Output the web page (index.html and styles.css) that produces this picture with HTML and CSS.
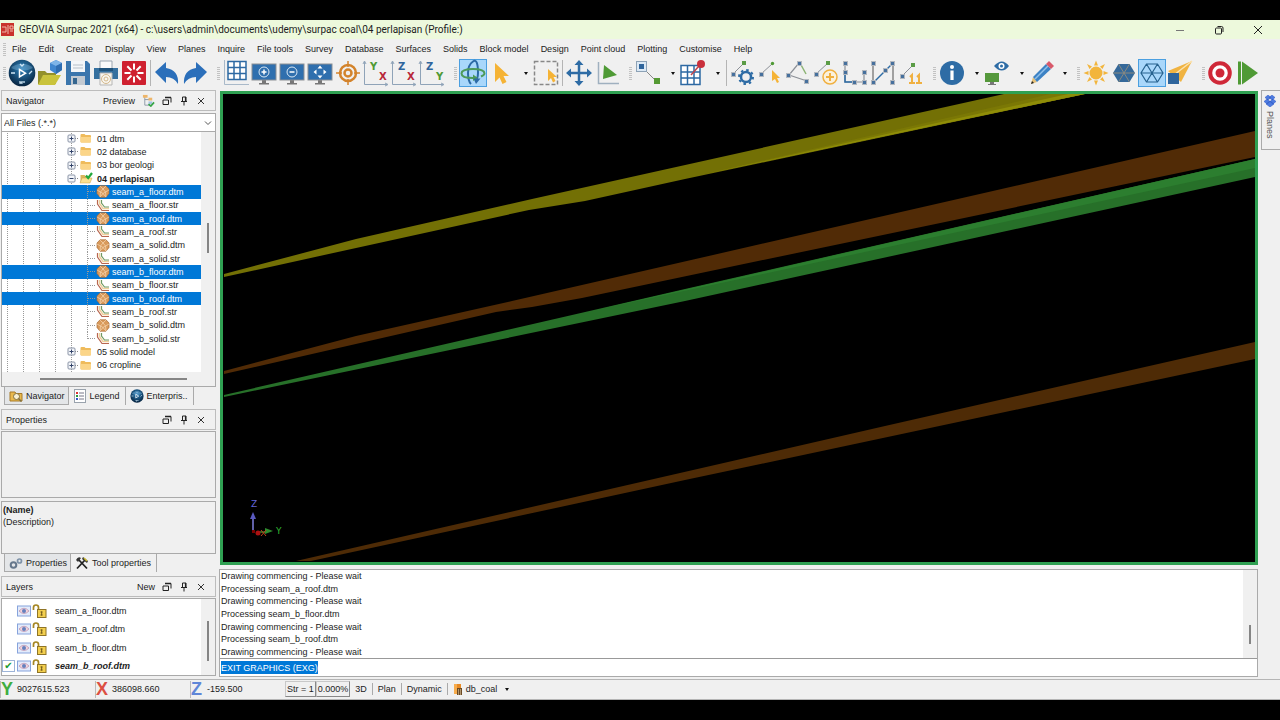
FILE: index.html
```
<!DOCTYPE html>
<html lang="en">
<head>
	<meta charset="UTF-8">
	<title>GEOVIA Surpac 2021</title>
	<link rel="stylesheet" href="styles.css">
</head>
<body>
<!-- shared icons -->
<svg class="defs" aria-hidden="true">
	<defs>
		<radialGradient id="ball" cx="50%" cy="35%" r="65%">
			<stop offset="0" stop-color="#2f84bd"/>
			<stop offset="1" stop-color="#06233f"/>
		</radialGradient>
	</defs>
	<symbol id="i-globe" viewBox="0 0 28 28">
		<circle cx="14" cy="14" r="13.3" fill="url(#ball)"/>
		<path d="M3 9a13 9 0 0 1 22 0a18 12 0 0 1-22 0z" fill="#8fc4e6" opacity=".35"/>
		<path d="M11.500 10.500l6 3.700-6 3.700z" fill="none" stroke="#fff" stroke-width="1.500"/>
		<path d="M3 14h4M21 15l3-3M12 5l2 2 2-2M12 22v2h2v-2M16 22v2" fill="none" stroke="#cfe6f5" stroke-width="1.300"/>
	</symbol>
	<symbol id="i-float" viewBox="0 0 10 10"><path d="M1 4h5.500v4.500H1zM3 1.500h6v5" fill="none" stroke="#222"/><path d="M3 1.500h6" stroke="#222" stroke-width="1.500"/></symbol>
	<symbol id="i-pin" viewBox="0 0 10 10"><path d="M3.500 1h3.500v4.500H3.500zM2 5.500h6M5 5.500v4" fill="none" stroke="#222"/><path d="M6.500 1v4.500" stroke="#222" stroke-width="1.200"/></symbol>
	<symbol id="i-close" viewBox="0 0 10 10"><path d="M2 2l6 6M8 2l-6 6" stroke="#333"/></symbol>
	<symbol id="i-plus" viewBox="0 0 15 13"><path d="M11 6.500h4" stroke="#888" stroke-dasharray="1 1"/><rect x="4" y="3" width="7" height="7" rx="1" fill="#f4f6fa" stroke="#8a94a6"/><path d="M5.500 6.500h4M7.500 4.500v4" stroke="#33446a"/></symbol>
	<symbol id="i-minus" viewBox="0 0 15 13"><path d="M11 6.500h4" stroke="#888" stroke-dasharray="1 1"/><rect x="4" y="3" width="7" height="7" rx="1" fill="#f4f6fa" stroke="#8a94a6"/><path d="M5.500 6.500h4" stroke="#33446a"/></symbol>
	<symbol id="i-folder" viewBox="0 0 14 13"><path d="M1.500 3q0-1 1-1h3l1 1h4.500q1 0 1 1v5.500q0 1-1 1H2.500q-1 0-1-1z" fill="#efbb5b"/><path d="M1.500 5h10.500v4.500q0 1-1 1H2.500q-1 0-1-1z" fill="#fbd588"/></symbol>
	<symbol id="i-folder-ok" viewBox="0 0 14 13"><path d="M1.500 3h4l1 1h4v6.500h-9z" fill="#d9b45c"/><path d="M1 11l2-5h10l-2 5z" fill="#fbe08f" stroke="#c9a146" stroke-width=".5"/><path d="M7 3.500l2.200 2.500L13 1" fill="none" stroke="#21a83c" stroke-width="2.200"/></symbol>
	<symbol id="i-dtm" viewBox="0 0 14 13"><path d="M4 .8h6l3 3.200v4.500l-3 3.700H4L1 8.500V4z" fill="#d99a5b" stroke="#a76a33" stroke-width=".7"/><path d="M4 1l3 3 3-3M1 5l3.500 2L7 4l2.500 3L13 5M4.500 7L4 12l3-3.500 3 3.500-.5-5M4.500 7L7 8.500 9.500 7" fill="none" stroke="#f6d9b4" stroke-width=".7"/></symbol>
	<symbol id="i-str" viewBox="0 0 14 13"><path d="M1.500 1v4l4.500 6.500h7" fill="none" stroke="#b9664f" stroke-width="1.200"/><path d="M3.500 1v3.500l3.500 5h6" fill="none" stroke="#efcf9c" stroke-width="1.500"/><path d="M5.500 1v3l3 4h4.500" fill="none" stroke="#6f9a62" stroke-width="1.200"/></symbol>
	<symbol id="i-branch" viewBox="0 0 10 13"><path d="M1.500 0v13M2 6.500h8" stroke="#999" stroke-dasharray="1 1"/></symbol>
	<symbol id="i-branch-end" viewBox="0 0 10 13"><path d="M1.500 0v7M2 6.500h8" stroke="#999" stroke-dasharray="1 1"/></symbol>
	<symbol id="i-eye" viewBox="0 0 14 12"><rect x=".5" y="1" width="13" height="10" fill="#e3ebfb" stroke="#86a3dc"/><path d="M2 6q5-5.500 10 0q-5 5-10 0z" fill="#f4d5dc" stroke="#b68ba8" stroke-width=".7"/><circle cx="7" cy="6" r="2" fill="#6480bd"/></symbol>
	<symbol id="i-lock" viewBox="0 0 15 14"><path d="M1.500 6V3.500q0-2.500 2.500-2.500t2.500 2.500V6" fill="none" stroke="#a58623" stroke-width="1.700"/><rect x="5.500" y="5.500" width="8.500" height="8" fill="#f3cf4f" stroke="#8f7426"/><path d="M9.700 7.500v4M8.500 8h2M8.500 11h2" stroke="#6b5418"/></symbol>
	<symbol id="i-node" viewBox="0 0 5 5"><rect x=".5" y=".5" width="4" height="4" fill="#46709d" stroke="#b3b8bf"/></symbol>
	<symbol id="i-monitor" viewBox="0 0 28 28"><path d="M12 21h4v3h3v1.500H9V24h3z" fill="#777"/><rect x="2" y="5" width="24" height="16" fill="#2f6fae" stroke="#8b8f94"/></symbol>
</svg>

<div class="app">
	<header class="titlebar">
		<svg class="logo" viewBox="0 0 13 13"><rect width="13" height="13" fill="#c9332b"/><path d="M1 4h4v5H1M7 2v9M9 3h3v3H9zM9 8h3" fill="none" stroke="#f0b9a8"/></svg>
		<h1>GEOVIA Surpac 2021 (x64) - c:\users\admin\documents\udemy\surpac coal\04 perlapisan (Profile:)</h1>
		<button class="win" aria-label="Minimise"><svg viewBox="0 0 10 10"><path d="M1 5.500h8" stroke="#777"/></svg></button>
		<button class="win" aria-label="Restore"><svg viewBox="0 0 10 10"><rect x="1.500" y="3" width="6" height="6" rx="1" fill="none" stroke="#222"/><path d="M3.500 1.500h4q1.500 0 1.500 1.500v4" fill="none" stroke="#222"/></svg></button>
		<button class="win" aria-label="Close"><svg viewBox="0 0 10 10"><path d="M1 1l8 8M9 1L1 9" stroke="#222"/></svg></button>
	</header>

	<nav class="menubar">
		<span class="grip"></span>
		<button>File</button><button>Edit</button><button>Create</button><button>Display</button><button>View</button><button>Planes</button><button>Inquire</button><button>File tools</button><button>Survey</button><button>Database</button><button>Surfaces</button><button>Solids</button><button>Block model</button><button>Design</button><button>Point cloud</button><button>Plotting</button><button>Customise</button><button>Help</button>
	</nav>

	<div class="toolbar">
		<div class="group">
			<span class="grip"></span>
			<button class="tool" aria-label="Main menu"><svg viewBox="0 0 28 28"><use href="#i-globe"/></svg></button>
			<button class="tool" aria-label="Open"><svg viewBox="0 0 28 28"><path d="M2 12h7l2 2h9v11H2z" fill="#93902a"/><path d="M7 16h18l-6 10H2z" fill="#c9c33c"/><path d="M20 1l6 3v7l-6 4-6-4V4z" fill="#3f86cf"/><path d="M14 4l6 3 6-3-6-3z" fill="#7db4e8"/><path d="M20 7v8l6-4V4z" fill="#2e6db2"/></svg></button>
			<button class="tool" aria-label="Save"><svg viewBox="0 0 28 28"><path d="M2 2h21l3 3v21H2z" fill="#3b76ad"/><rect x="7" y="2" width="14" height="11" fill="#f4f6f8"/><path d="M9 6h10M9 9h10" stroke="#b6bfc8"/><rect x="7" y="17" width="14" height="9" fill="#c3cad2"/><rect x="9" y="19" width="4" height="6" fill="#35668f"/></svg></button>
			<button class="tool" aria-label="Print"><svg viewBox="0 0 28 28"><path d="M8 2h12v8H8z" fill="#fafafa" stroke="#9aa5b0"/><path d="M2 9h24v11H2z" fill="#35709f"/><path d="M7 9h14v3H7z" fill="#20537c"/><path d="M8 14h12v12H8z" fill="#f8f5ef" stroke="#b5b5b5"/><circle cx="14" cy="20" r="4.500" fill="none" stroke="#d3b88c"/><circle cx="14" cy="20" r="2" fill="none" stroke="#d3b88c"/></svg></button>
			<button class="tool" aria-label="Reset graphics"><svg viewBox="0 0 28 28"><rect x="2" y="2" width="24" height="24" rx="1" fill="#cf2030"/><path d="M14 4.500v6M14 17.500v6M4.500 14h6M17.500 14h6M7.300 7.300l4.200 4.200M16.500 16.500l4.200 4.200M20.700 7.300l-4.200 4.200M11.500 16.500l-4.200 4.200" stroke="#fff" stroke-width="2"/></svg></button>
			<span class="sep"></span>
			<button class="tool" aria-label="Undo"><svg viewBox="0 0 28 28"><path d="M2 13L13 3v6q13 2 12 16q-4-7-12-7v6z" fill="#2b6fba"/></svg></button>
			<button class="tool" aria-label="Redo"><svg viewBox="0 0 28 28"><path d="M26 13L15 3v6Q2 11 3 25q4-7 12-7v6z" fill="#2b6fba"/></svg></button>
		</div>
		<div class="group">
			<span class="grip"></span>
			<button class="tool" aria-label="Grid"><svg viewBox="0 0 28 28"><path d="M2.500 1v24.500H27" fill="none" stroke="#a9b9c9"/><path d="M6 2.500h18v18H6zM6 8.500h18M6 14.500h18M12 2.500v18M18 2.500v18" fill="#fff" stroke="#2d69a3" stroke-width="1.500"/></svg></button>
			<button class="tool" aria-label="Zoom in"><svg viewBox="0 0 28 28"><use href="#i-monitor"/><circle cx="14" cy="13" r="5" fill="none" stroke="#d9e8f5"/><path d="M11.500 13h5M14 10.500v5" stroke="#fff" stroke-width="1.500"/></svg></button>
			<button class="tool" aria-label="Zoom out"><svg viewBox="0 0 28 28"><use href="#i-monitor"/><circle cx="14" cy="13" r="5" fill="none" stroke="#d9e8f5"/><path d="M11.500 13h5" stroke="#fff" stroke-width="1.500"/></svg></button>
			<button class="tool" aria-label="Zoom all"><svg viewBox="0 0 28 28"><use href="#i-monitor"/><path d="M14 6.500l2.500 3h-5zM14 19.500l2.500-3h-5zM7.500 13l3-2.500v5zM20.500 13l-3-2.500v5z" fill="#fff"/></svg></button>
			<button class="tool" aria-label="Centre view"><svg viewBox="0 0 28 28"><circle cx="14" cy="14" r="8" fill="none" stroke="#d3832b" stroke-width="2.500"/><circle cx="14" cy="14" r="3.500" fill="none" stroke="#d3832b" stroke-width="2.500"/><path d="M14 2v6M14 20v6M2 14h6M20 14h6" stroke="#d3832b" stroke-width="1.500"/></svg></button>
			<button class="tool axes" aria-label="Plan view"><svg viewBox="0 0 28 28"><path d="M2.500 3v22.500H25M1 5l1.500-3L4 5M23 24l3 1.500L23 27" fill="none" stroke="#8fa3b8"/><text class="ax-y" x="8" y="11">Y</text><text class="ax-x" x="17" y="21">X</text></svg></button>
			<button class="tool axes" aria-label="XZ section"><svg viewBox="0 0 28 28"><path d="M2.500 3v22.500H25M1 5l1.500-3L4 5M23 24l3 1.500L23 27" fill="none" stroke="#8fa3b8"/><text class="ax-z" x="8" y="11">Z</text><text class="ax-x" x="17" y="21">X</text></svg></button>
			<button class="tool axes" aria-label="YZ section"><svg viewBox="0 0 28 28"><path d="M2.500 3v22.500H25M1 5l1.500-3L4 5M23 24l3 1.500L23 27" fill="none" stroke="#8fa3b8"/><text class="ax-z" x="8" y="11">Z</text><text class="ax-y" x="18" y="21">Y</text></svg></button>
		</div>
		<div class="group">
			<span class="grip"></span>
			<button class="tool active" aria-label="Orbit"><svg viewBox="0 0 28 28"><path d="M12 25Q9 22 9 14T14 2.500T19 14Q19 17 18 20" fill="none" stroke="#2c6aa6" stroke-width="2"/><path d="M22 17.500Q25.500 16 25.500 14.500Q25.500 10 14 10T2.500 14.500T14 19" fill="none" stroke="#4d9a5a" stroke-width="2"/><path d="M14 15.500l5 3.500-5 3z" fill="#4d9a5a"/><path d="M14.500 19.500h7L17 25z" fill="#2c6aa6"/></svg></button>
			<button class="tool" aria-label="Select"><svg viewBox="0 0 28 28"><path d="M8 4v19l4.500-4.500L15.500 25l4-2-3-6H22z" fill="#f5b335"/></svg></button>
			<button class="caret" aria-label="Select options"></button>
			<button class="tool" aria-label="Box select"><svg viewBox="0 0 28 28"><rect x="2.500" y="2.500" width="23" height="23" fill="none" stroke="#888" stroke-width="1.500" stroke-dasharray="4 2"/><path d="M16 10v12l3-3 2 4.500 2.500-1.500-2-4H25z" fill="#f5b335"/></svg></button>
			<span class="sep"></span>
			<button class="tool" aria-label="Move"><svg viewBox="0 0 28 28"><path d="M14 4v20M4 14h20" stroke="#2e6ca5" stroke-width="2.500"/><path d="M14 1l4.500 5h-9zM14 27l4.500-5h-9zM1 14l5-4.500v9zM27 14l-5-4.500v9z" fill="#2e6ca5"/></svg></button>
			<button class="tool" aria-label="Section view"><svg viewBox="0 0 28 28"><path d="M5.500 3v21.500H26" fill="none" stroke="#9fb0bf" stroke-width="1.500"/><path d="M11 6l13 10-14 4z" fill="#4f9a35"/></svg></button>
		</div>
		<div class="group">
			<span class="grip"></span>
			<button class="tool" aria-label="Segment"><svg viewBox="0 0 28 28"><path d="M8 8l14 14" stroke="#888"/><rect x="2.500" y="2.500" width="10" height="10" fill="#dce9f5" stroke="#8da2b6"/><rect x="5" y="5" width="5" height="5" fill="#2f659c"/><rect x="20" y="19" width="6" height="6" fill="#559a34"/></svg></button>
			<button class="caret" aria-label="Segment options"></button>
			<button class="tool" aria-label="Grid pin"><svg viewBox="0 0 28 28"><path d="M2 6.500h19v19H2zM2 13h19M2 19h19M8.500 6.500v19M15 6.500v19" fill="#fff" stroke="#2d69a3" stroke-width="1.500"/><path d="M12 16l8-9" stroke="#c1444c" stroke-width="1.500"/><circle cx="22" cy="5" r="4" fill="#c9303c"/></svg></button>
			<button class="caret" aria-label="Grid options"></button>
			<span class="sep"></span>
			<button class="tool" aria-label="Segment properties"><svg viewBox="0 0 28 28"><path d="M4 15L15 4" stroke="#8c9097"/><use href="#i-node" x="2" y="13" width="5" height="5"/><rect x="13" y="2" width="4" height="4" fill="#5b9c46"/><circle cx="17" cy="18" r="5" fill="none" stroke="#2e6ca5" stroke-width="2.500"/><circle cx="17" cy="18" r="7" fill="none" stroke="#2e6ca5" stroke-width="2" stroke-dasharray="2.500 3"/></svg></button>
			<button class="tool" aria-label="Pick point"><svg viewBox="0 0 28 28"><path d="M4 15L15 5" stroke="#8c9097"/><use href="#i-node" x="2" y="13" width="5" height="5"/><circle cx="15.500" cy="4.500" r="1.700" fill="#4f9a35"/><path d="M15 11v11l3-2 2 4 2-1-2-4h3z" fill="#f5b335"/></svg></button>
			<button class="tool" aria-label="Close segment"><svg viewBox="0 0 28 28"><path d="M22 22L4 16 14 4" fill="none" stroke="#8c9097" stroke-width="1.200"/><path d="M15 4l6 11" stroke="#8cb474" stroke-width="1.500"/><use href="#i-node" x="12" y="2" width="5" height="5"/><use href="#i-node" x="1" y="14" width="5" height="5"/><use href="#i-node" x="19" y="20" width="5" height="5"/></svg></button>
			<button class="tool" aria-label="Insert point"><svg viewBox="0 0 28 28"><path d="M3 15L15 4" stroke="#8c9097"/><use href="#i-node" x="1" y="13" width="5" height="5"/><rect x="13" y="2" width="4" height="4" fill="#5b9c46"/><circle cx="17" cy="18" r="7" fill="#fbf1dc" stroke="#f0b040" stroke-width="1.500"/><path d="M13 18h8M17 14v8" stroke="#f0b040" stroke-width="2"/></svg></button>
			<button class="tool" aria-label="Extend segment"><svg viewBox="0 0 28 28"><path d="M4 4v19h19V12" fill="none" stroke="#8c9097" stroke-width="1.200"/><path d="M4 14v9h8" fill="none" stroke="#2e6ca5" stroke-width="1.500"/><use href="#i-node" x="2" y="2" width="5" height="5"/><use href="#i-node" x="2" y="11" width="5" height="5"/><use href="#i-node" x="11" y="21" width="5" height="5"/><use href="#i-node" x="21" y="21" width="5" height="5"/><use href="#i-node" x="21" y="11" width="5" height="5"/></svg></button>
			<button class="tool" aria-label="Join segments"><svg viewBox="0 0 28 28"><path d="M4 4v20M24 4v20" stroke="#a0a0a0" stroke-width="2"/><path d="M4 24L24 4" stroke="#2e6ca5" stroke-width="1.500"/><use href="#i-node" x="2" y="2" width="5" height="5"/><use href="#i-node" x="2" y="21" width="5" height="5"/><use href="#i-node" x="14" y="9" width="5" height="5"/><use href="#i-node" x="21" y="2" width="5" height="5"/><use href="#i-node" x="21" y="21" width="5" height="5"/></svg></button>
			<button class="tool" aria-label="Renumber"><svg viewBox="0 0 28 28"><path d="M5 17L16 6" stroke="#8c9097"/><use href="#i-node" x="3" y="15" width="5" height="5"/><rect x="14" y="4" width="4" height="4" fill="#5b9c46"/><path d="M13 18l2-2v8M12 24h6M20 18l2-2v8M19 24h6" fill="none" stroke="#f0b040" stroke-width="2"/></svg></button>
		</div>
		<div class="group">
			<span class="grip"></span>
			<button class="tool" aria-label="Inquire"><svg viewBox="0 0 28 28"><circle cx="14" cy="14" r="12" fill="#2e6ca5"/><circle cx="14" cy="8" r="2" fill="#fff"/><path d="M14 11.500V21" stroke="#fff" stroke-width="3.200"/></svg></button>
			<button class="caret" aria-label="Inquire options"></button>
			<button class="tool" aria-label="Display"><svg viewBox="0 0 28 28"><rect x="2" y="14" width="14" height="9" fill="#55983b"/><path d="M7 23h4v2h2v1H5v-1h2z" fill="#777"/><path d="M11 7q8-9 15 0q-7 9-15 0z" fill="#2e6ca5"/><circle cx="18.500" cy="7" r="3" fill="#fff"/><circle cx="18.500" cy="7" r="1.500" fill="#2e6ca5"/></svg></button>
			<button class="caret" aria-label="Display options"></button>
			<button class="tool" aria-label="Edit"><svg viewBox="0 0 28 28"><path d="M3 25l2-7 4 5z" fill="#e5c078"/><path d="M3 25l1-3 2 2z" fill="#222"/><path d="M5 18L18 5l5 5L9 23z" fill="#3c82c4"/><path d="M7 20L20 7" stroke="#8fc0ea" stroke-width="1.500"/><path d="M18 5l3-3 5 5-3 3z" fill="#d8596a"/></svg></button>
			<button class="caret" aria-label="Edit options"></button>
		</div>
		<div class="group">
			<span class="grip"></span>
			<button class="tool" aria-label="Lighting"><svg viewBox="0 0 28 28"><circle cx="14" cy="14" r="6.500" fill="#f2b53c"/><path d="M14 1.500l2 5h-4zM14 26.500l2-5h-4zM1.500 14l5-2v4zM26.500 14l-5-2v4zM5 5l5 2.500L7.500 10zM23 5l-5 2.500 2.500 2.500zM5 23l5-2.500L7.500 18zM23 23l-5-2.500 2.500-2.500z" fill="#f2b53c"/></svg></button>
			<button class="tool" aria-label="Shaded"><svg viewBox="0 0 28 28"><path d="M8.500 5h11L25 14l-5.500 9h-11L3 14z" fill="#35699a"/><path d="M8.500 5l11 18M19.500 5l-11 18M3 14h22" stroke="#8b8a80"/></svg></button>
			<button class="tool active" aria-label="Wireframe"><svg viewBox="0 0 28 28"><path d="M8.500 5h11L25 14l-5.500 9h-11L3 14zM8.500 5l11 18M19.500 5l-11 18M3 14h22" fill="none" stroke="#27628f" stroke-width="1.200"/></svg></button>
			<button class="tool" aria-label="Light source"><svg viewBox="0 0 28 28"><path d="M2 12L26 2 15 23z" fill="#f0b341"/><path d="M26 2L8 16" stroke="#fbe3b0" stroke-width="1.500"/><rect x="2" y="14" width="11" height="11" fill="#2f659c"/></svg></button>
		</div>
		<div class="group">
			<span class="grip"></span>
			<button class="tool" aria-label="Record"><svg viewBox="0 0 28 28"><circle cx="13" cy="14" r="9.800" fill="#fff" stroke="#cf2838" stroke-width="4"/><circle cx="13" cy="14" r="4.500" fill="#cf2838"/></svg></button>
			<button class="tool" aria-label="Play"><svg viewBox="0 0 28 28"><path d="M3 2.500h3v23H3zM7 2.500L23 14 7 25.500z" fill="#4f9a35"/></svg></button>
		</div>
	</div>

	<main class="workspace">
		<aside class="side">
			<section class="dock">
				<div class="dock-head"><h2>Navigator</h2><button>Preview</button>
					<button aria-label="Tree view"><svg class="tree-ic" viewBox="0 0 14 14"><path d="M3 3v9h6M3 6h5" fill="none" stroke="#8a98a8"/><rect x="1" y="1" width="5" height="3" fill="#eeb568"/><rect x="7" y="4" width="4" height="3" fill="#eeb568"/><rect x="7" y="8" width="4" height="3" fill="#a6c4e5"/><path d="M7 11l2.500 2L13 9" fill="none" stroke="#37a546" stroke-width="1.800"/></svg></button>
					<button aria-label="Float"><svg viewBox="0 0 10 10"><use href="#i-float"/></svg></button><button aria-label="Pin"><svg viewBox="0 0 10 10"><use href="#i-pin"/></svg></button><button aria-label="Close"><svg viewBox="0 0 10 10"><use href="#i-close"/></svg></button></div>
				<div class="files">
					<div class="filter">
						<select aria-label="File type"><option>All Files (.*.*)</option></select>
						<svg viewBox="0 0 8 8"><path d="M1 2.500l3 3 3-3" fill="none" stroke="#555"/></svg>
					</div>
					<div class="tree-wrap">
						<ul class="tree">
							<li><svg class="ic-exp"><use href="#i-plus"/></svg><svg class="ic-folder"><use href="#i-folder"/></svg>01 dtm</li>
							<li><svg class="ic-exp"><use href="#i-plus"/></svg><svg class="ic-folder"><use href="#i-folder"/></svg>02 database</li>
							<li><svg class="ic-exp"><use href="#i-plus"/></svg><svg class="ic-folder"><use href="#i-folder"/></svg>03 bor geologi</li>
							<li class="open"><svg class="ic-exp"><use href="#i-minus"/></svg><svg class="ic-folder"><use href="#i-folder-ok"/></svg>04 perlapisan</li>
							<li class="leaf selected"><svg class="ic-branch"><use href="#i-branch"/></svg><svg class="ic-file"><use href="#i-dtm"/></svg>seam_a_floor.dtm</li>
							<li class="leaf"><svg class="ic-branch"><use href="#i-branch"/></svg><svg class="ic-file"><use href="#i-str"/></svg>seam_a_floor.str</li>
							<li class="leaf selected"><svg class="ic-branch"><use href="#i-branch"/></svg><svg class="ic-file"><use href="#i-dtm"/></svg>seam_a_roof.dtm</li>
							<li class="leaf"><svg class="ic-branch"><use href="#i-branch"/></svg><svg class="ic-file"><use href="#i-str"/></svg>seam_a_roof.str</li>
							<li class="leaf"><svg class="ic-branch"><use href="#i-branch"/></svg><svg class="ic-file"><use href="#i-dtm"/></svg>seam_a_solid.dtm</li>
							<li class="leaf"><svg class="ic-branch"><use href="#i-branch"/></svg><svg class="ic-file"><use href="#i-str"/></svg>seam_a_solid.str</li>
							<li class="leaf selected"><svg class="ic-branch"><use href="#i-branch"/></svg><svg class="ic-file"><use href="#i-dtm"/></svg>seam_b_floor.dtm</li>
							<li class="leaf"><svg class="ic-branch"><use href="#i-branch"/></svg><svg class="ic-file"><use href="#i-str"/></svg>seam_b_floor.str</li>
							<li class="leaf selected"><svg class="ic-branch"><use href="#i-branch"/></svg><svg class="ic-file"><use href="#i-dtm"/></svg>seam_b_roof.dtm</li>
							<li class="leaf"><svg class="ic-branch"><use href="#i-branch"/></svg><svg class="ic-file"><use href="#i-str"/></svg>seam_b_roof.str</li>
							<li class="leaf"><svg class="ic-branch"><use href="#i-branch"/></svg><svg class="ic-file"><use href="#i-dtm"/></svg>seam_b_solid.dtm</li>
							<li class="leaf"><svg class="ic-branch"><use href="#i-branch-end"/></svg><svg class="ic-file"><use href="#i-str"/></svg>seam_b_solid.str</li>
							<li><svg class="ic-exp"><use href="#i-plus"/></svg><svg class="ic-folder"><use href="#i-folder"/></svg>05 solid model</li>
							<li><svg class="ic-exp"><use href="#i-plus"/></svg><svg class="ic-folder"><use href="#i-folder"/></svg>06 cropline</li>
						</ul>
						<div class="vbar nav-bar"><span></span></div>
					</div>
					<div class="hbar"><span></span></div>
				</div>
				<div class="tabs">
					<button class="current"><svg viewBox="0 0 14 14"><path d="M1 3h5l1 1.500h6V12H1z" fill="#e9b94d" stroke="#a77a28"/><circle cx="7.500" cy="7.500" r="3" fill="#f8f0d2" stroke="#80703f"/><path d="M9.500 9.500l3 3" stroke="#80703f" stroke-width="1.500"/></svg>Navigator</button>
					<button><svg viewBox="0 0 14 14"><rect x="1.500" y=".5" width="11" height="13" fill="#fff" stroke="#9aa3ad"/><path d="M3 4h2" stroke="#d33" stroke-width="2"/><path d="M3 7h2" stroke="#2a9a3a" stroke-width="2"/><path d="M3 10h2" stroke="#35c" stroke-width="2"/><path d="M6 4h5M6 7h5M6 10h5" stroke="#778"/></svg>Legend</button>
					<button><svg viewBox="0 0 28 28"><use href="#i-globe"/></svg>Enterpris..</button>
				</div>
			</section>

			<section class="dock">
				<div class="dock-head"><h2>Properties</h2><button aria-label="Float"><svg viewBox="0 0 10 10"><use href="#i-float"/></svg></button><button aria-label="Pin"><svg viewBox="0 0 10 10"><use href="#i-pin"/></svg></button><button aria-label="Close"><svg viewBox="0 0 10 10"><use href="#i-close"/></svg></button></div>
				<div class="props"></div>
				<div class="describe"><b>(Name)</b><p>(Description)</p></div>
				<div class="tabs">
					<button class="current"><svg viewBox="0 0 14 14"><circle cx="4.500" cy="9" r="2.800" fill="none" stroke="#66788c" stroke-width="2"/><circle cx="10.500" cy="5" r="2" fill="none" stroke="#7f93a9" stroke-width="1.700"/></svg>Properties</button>
					<button><svg viewBox="0 0 14 14"><path d="M2 12.500L10 4M3 3l9 9.500" stroke="#222" stroke-width="1.800"/><path d="M1 4q2-4 5-2L3 6zM8 1l5 4-1 2-5-4z" fill="#333"/><path d="M9 2l3 3" stroke="#c9b82c" stroke-width="1.500"/></svg>Tool properties</button>
				</div>
			</section>

			<section class="dock layers">
				<div class="dock-head"><h2>Layers</h2><button>New</button><button aria-label="Float"><svg viewBox="0 0 10 10"><use href="#i-float"/></svg></button><button aria-label="Pin"><svg viewBox="0 0 10 10"><use href="#i-pin"/></svg></button><button aria-label="Close"><svg viewBox="0 0 10 10"><use href="#i-close"/></svg></button></div>
				<div class="layer-wrap">
					<ul class="layer-list">
						<li><svg class="ic-eye"><use href="#i-eye"/></svg><svg class="ic-lock"><use href="#i-lock"/></svg>seam_a_floor.dtm</li>
						<li><svg class="ic-eye"><use href="#i-eye"/></svg><svg class="ic-lock"><use href="#i-lock"/></svg>seam_a_roof.dtm</li>
						<li><svg class="ic-eye"><use href="#i-eye"/></svg><svg class="ic-lock"><use href="#i-lock"/></svg>seam_b_floor.dtm</li>
						<li class="on"><input type="checkbox" id="active-layer" checked><svg class="ic-eye"><use href="#i-eye"/></svg><svg class="ic-lock"><use href="#i-lock"/></svg><label for="active-layer">seam_b_roof.dtm</label></li>
					</ul>
					<div class="vbar layer-bar"><span></span></div>
				</div>
			</section>
		</aside>

		<div class="centre">
			<div class="viewport">
				<svg viewBox="223 94 1032 468" preserveAspectRatio="none">
					<!-- seams -->
					<polygon points="224,274 356,239 532,199 1004,94 1085,94 685,179 585,201 529,210 224,277" fill="#737005"/>
					<polygon points="705,174 1050,94 1085,94" fill="#7b7805"/>
					<polygon points="705,174 1068,94 1085,94" fill="#8f8d08"/>
					<polygon points="224,371 356,336 512,301 1255,131 1255,157 582,298 532,307 496,312 224,374" fill="#512b06"/>
					<polygon points="224,395 685,289 1255,159 1255,177 685,301 224,397" fill="#277029"/>
					<polygon points="600,309 1255,159 1255,168" fill="#2c7e2f"/>
					<polygon points="296,561 885,426 1255,342 1255,359 685,480 311,561" fill="#4e2b06"/>
					<!-- axis marker -->
					<path d="M253 532v-14" stroke="#8080e0" stroke-width="1.500"/>
					<path d="M253 512l3 7h-6z" fill="#5a5ac0"/>
					<path d="M258 532h8" stroke="#2f8f2f" stroke-width="1.500"/>
					<path d="M273 531l-8-3v6z" fill="#2d8b2d"/>
					<path d="M252 530h3v3h-3z" fill="#700"/>
					<circle cx="258" cy="533" r="2.500" fill="#a11"/>
					<path d="M261 530l5 6M266 530l-5 6" stroke="#c0401a"/>
					<text x="251" y="507" fill="#6464d8">Z</text>
					<text x="276" y="534" fill="#32b432">Y</text>
				</svg>
			</div>
			<div class="console">
				<div class="log-wrap">
					<div class="log">
						<p>Drawing commencing - Please wait</p>
						<p>Processing seam_a_roof.dtm</p>
						<p>Drawing commencing - Please wait</p>
						<p>Processing seam_b_floor.dtm</p>
						<p>Drawing commencing - Please wait</p>
						<p>Processing seam_b_roof.dtm</p>
						<p>Drawing commencing - Please wait</p>
					</div>
					<div class="vbar log-bar"><span></span></div>
				</div>
				<div class="command"><input type="text" aria-label="Command" value="EXIT GRAPHICS (EXG)"></div>
			</div>
		</div>

		<div class="rail">
			<button><svg viewBox="0 0 12 12"><path d="M4 0l3 2.500L4 5 1 2.500zM8 0l3 2.500L8 5 5 2.500zM3 4l3 2.500L3 9 0 6.500zM9 4l3 2.500L9 9 6 6.500zM6 6l4 3-4 3-4-3z" fill="#4d7be0" stroke="#2a55c0" stroke-width=".5"/></svg><span>Planes</span></button>
		</div>
	</main>

	<footer class="status">
		<div class="coord y"><b>Y</b>9027615.523</div>
		<div class="coord x"><b>X</b>386098.660</div>
		<div class="coord z"><b>Z</b>-159.500</div>
		<button class="sunk">Str = 1</button><button class="sunk">0.000%</button>
		<button class="flat">3D</button><button class="flat">Plan</button><button class="flat">Dynamic</button>
		<button class="flat db"><svg viewBox="0 0 10 12"><path d="M1 1h7v10H1z" fill="#e88a24"/><path d="M1 1h3v10H1z" fill="#f7ac4c"/><path d="M4 5h5v7H4z" fill="#6b4a24"/><path d="M5.500 6v6M7.500 6v6" stroke="#d0b890" stroke-width=".7"/></svg>db_coal</button>
		<button class="caret" aria-label="Database options"></button>
	</footer>
</div>
</body>
</html>
```
FILE: styles.css
```
* {
	box-sizing: border-box;
}
body {
	margin: 0;
	background: #000;
	color: #1c1c1c;
	font: 9px/12px "Liberation Sans", Arial, sans-serif;
}
h1, h2, p, ul {
	margin: 0;
	padding: 0;
	font: inherit;
	list-style: none;
}
button, select, input {
	margin: 0;
	padding: 0;
	border: 0;
	background: none;
	color: inherit;
	font: inherit;
}
svg {
	display: block;
	flex: none;
}
.defs {
	position: absolute;
	width: 0;
	height: 0;
}
.app {
	display: flex;
	flex-direction: column;
	height: calc(100vh - 40px);
	margin: 20px 0;
	background: #f0f0f0;
}

/* title and menu */
.titlebar {
	display: flex;
	align-items: center;
	height: 19px;
	padding: 0 3px 0 1px;
	background: #edf9dc;
}
.titlebar .logo {
	width: 13px;
	height: 13px;
	margin-right: 5px;
}
.titlebar h1 {
	flex: 1;
	font: 10px/19px Roboto, "Noto Sans", sans-serif;
}
.win {
	display: flex;
	justify-content: center;
	width: 39px;
}
.win svg {
	width: 10px;
	height: 10px;
}
.menubar {
	display: flex;
	align-items: center;
	height: 20px;
}
.menubar button {
	padding: 0 6px;
	white-space: nowrap;
}
.grip {
	width: 3px;
	height: 13px;
	margin: 0 0 0 3px;
	background: repeating-linear-gradient(#c2c2c2 0 1px, transparent 1px 2px);
}

/* toolbar */
.toolbar {
	display: flex;
	gap: 5px;
	height: 31px;
}
.group {
	display: flex;
	align-items: center;
	height: 28px;
}
.group .grip {
	margin-right: 2px;
}
.tool {
	width: 28px;
	height: 28px;
}
.tool svg {
	width: 28px;
	height: 28px;
}
.tool.active {
	background: #a9d7fb;
	box-shadow: inset 0 0 0 1px #4b9fe0;
}
.tool text {
	font: bold 10px "DejaVu Sans", sans-serif;
}
.ax-x { fill: #b8283a; }
.ax-y { fill: #4f9a35; }
.ax-z { fill: #2f659c; }
.caret {
	display: flex;
	justify-content: flex-end;
	align-items: center;
	width: 17px;
	padding-right: 4px;
}
.caret:last-child {
	width: 13px;
	padding-right: 2px;
}
.caret::after {
	content: "";
	border: 2px solid transparent;
	border-top: 3px solid #111;
	border-bottom: 0;
}
.sep {
	width: 1px;
	height: 26px;
	margin: 0 2px;
	background: #b4b4b4;
}

/* workspace */
.workspace {
	display: flex;
	flex: 1;
	min-height: 0;
}
.side {
	display: flex;
	flex-direction: column;
	gap: 4px;
	width: 215px;
	margin: 0 3px 3px 1px;
}
.dock {
	display: flex;
	flex-direction: column;
}
.dock-head {
	display: flex;
	align-items: center;
	height: 21px;
	padding: 0 9px 0 4px;
	border: 1px solid #bcbcbc;
}
.dock-head h2 {
	flex: 1;
}
.dock-head button {
	margin-left: 7px;
}
.dock-head button:first-of-type {
	margin-left: 0;
}
.dock-head svg {
	width: 10px;
	height: 10px;
}
.dock-head .tree-ic {
	width: 13px;
	height: 13px;
}
.files {
	margin-top: 2px;
	border: 1px solid #aaa;
}
.filter {
	display: flex;
	align-items: center;
	height: 18px;
	padding-right: 3px;
	border-bottom: 1px solid #aaa;
	background: #fff;
}
.filter select {
	flex: 1;
	padding-left: 2px;
	appearance: none;
	outline: 0;
}
.filter svg {
	width: 8px;
	height: 8px;
}
.tree-wrap {
	display: flex;
	background: #fff;
}
.tree {
	display: grid;
	grid-auto-rows: 1fr;
	flex: 1;
	height: 240px;
	background:
		repeating-linear-gradient(to bottom, #fff 0 1px, transparent 1px 2px) 0 0 / 80px 100% no-repeat,
		repeating-linear-gradient(to right, transparent 0 5px, #999 5px 6px, transparent 6px 16px) 0 0 / 72px 100% no-repeat;
}
.tree li {
	display: flex;
	align-items: center;
	padding-left: 62px;
}
.tree .leaf {
	padding-left: 84px;
}
.tree .open {
	font-weight: bold;
}
.tree .selected {
	background: #0078d7;
	color: #fff;
}
.ic-exp { width: 15px; height: 13px; }
.ic-folder { width: 14px; height: 13px; margin-right: 4px; }
.ic-branch { width: 10px; height: 13px; }
.ic-file { width: 14px; height: 13px; margin-right: 2px; }
.ic-eye { width: 14px; height: 12px; }
.ic-lock { width: 15px; height: 14px; margin: 0 8px 0 1px; }
.vbar {
	flex: none;
	width: 14px;
	padding-left: 6px;
	background: #f0f0f0;
}
.vbar span {
	display: block;
	width: 2px;
	background: #858585;
}
.nav-bar span { height: 30px; margin-top: 91px; }
.layer-bar span { height: 40px; margin-top: 22px; }
.log-bar span { height: 19px; margin-top: 55px; }
.hbar {
	height: 14px;
	padding: 6px 28px 0 38px;
}
.hbar span {
	display: block;
	height: 2px;
	background: #858585;
}
.tabs {
	display: flex;
	height: 18px;
	padding-left: 3px;
}
.tabs button {
	display: flex;
	align-items: center;
	gap: 3px;
	padding: 0 5px 0 4px;
	border-right: 1px solid #aaa;
}
.tabs svg {
	width: 14px;
	height: 14px;
}
.tabs .current {
	padding: 0 3px 0 4px;
	border: 1px solid #aaa;
	border-top: 0;
	background: #e4e6e8;
}
.props {
	height: 67px;
	margin-top: 1px;
	border: 1px solid #aaa;
}
.describe {
	height: 53px;
	margin-top: 3px;
	padding: 2px 1px;
	border: 1px solid #aaa;
}
.layers {
	flex: 1;
	min-height: 0;
}
.layer-wrap {
	display: flex;
	flex: 1;
	min-height: 0;
	margin-top: 1px;
	border: 1px solid #aaa;
	background: #fff;
}
.layer-list {
	display: grid;
	grid-auto-rows: 1fr;
	flex: 1;
	padding-top: 3px;
}
.layer-list li {
	display: flex;
	align-items: center;
	padding-left: 15px;
}
.layer-list .on {
	padding-left: 0;
	font-weight: bold;
	font-style: italic;
}
.layer-list input {
	display: grid;
	place-items: center;
	appearance: none;
	width: 13px;
	height: 12px;
	margin-right: 2px;
	border: 1px solid #9db4d8;
}
.layer-list input:checked::before {
	content: "\2714";
	color: #1b9a30;
	font: 10px/10px "DejaVu Sans", sans-serif;
}

/* graphics */
.centre {
	display: flex;
	flex-direction: column;
	flex: 1;
	min-width: 0;
	margin: 1px 0 2px;
}
.viewport {
	flex: 1;
	min-height: 0;
	margin-left: 1px;
	border: 3px solid #2fa052;
	background: #000;
}
.viewport svg {
	width: 100%;
	height: 100%;
}
.viewport text {
	font: 9px "DejaVu Sans", sans-serif;
}
.console {
	margin-top: 4px;
	border: 1px solid #aaa;
	background: #fff;
}
.log-wrap {
	display: flex;
	height: 89px;
	border-bottom: 1px solid #999;
}
.log {
	display: grid;
	grid-auto-rows: 1fr;
	align-items: center;
	flex: 1;
	padding-left: 1px;
}
.command {
	height: 17px;
	padding: 2px 1px;
}
.command input {
	display: block;
	width: 97px;
	height: 13px;
	background: #0078d7;
	color: #fff;
	outline: 0;
}
.rail {
	width: 22px;
	padding-left: 3px;
}
.rail button {
	display: flex;
	flex-direction: column;
	align-items: center;
	gap: 4px;
	width: 100%;
	height: 60px;
	padding: 4px 2px 0 0;
	border: 1px solid #aaa;
	border-right: 0;
	color: #555;
}
.rail svg {
	width: 12px;
	height: 12px;
}
.rail span {
	writing-mode: vertical-rl;
}

/* status bar */
.status {
	display: flex;
	align-items: center;
	height: 21px;
	padding-bottom: 1px;
	border-top: 1px solid #b5b5b5;
	border-bottom: 1px solid #b5b5b5;
}
.coord {
	display: flex;
	align-items: center;
	width: 95px;
	height: 17px;
	border-left: 1px solid #bbb;
}
.coord b {
	width: 16px;
	font: bold 18px/17px "Liberation Sans", Arial, sans-serif;
}
.y b { color: #3fae3f; }
.x b { color: #dc4f42; }
.z b { color: #5f86d8; }
.sunk {
	height: 16px;
	padding: 0 1px;
	border: 1px solid #c8c8c8;
	border-right-color: #888;
	border-bottom-color: #888;
}
.flat {
	display: flex;
	align-items: center;
	gap: 3px;
	height: 12px;
	padding: 0 5px;
	border-right: 1px solid #aaa;
}
.flat.db {
	padding-right: 0;
	border: 0;
}
.db svg {
	width: 10px;
	height: 12px;
}
.status .caret {
	width: 14px;
	padding-right: 2px;
}
```
